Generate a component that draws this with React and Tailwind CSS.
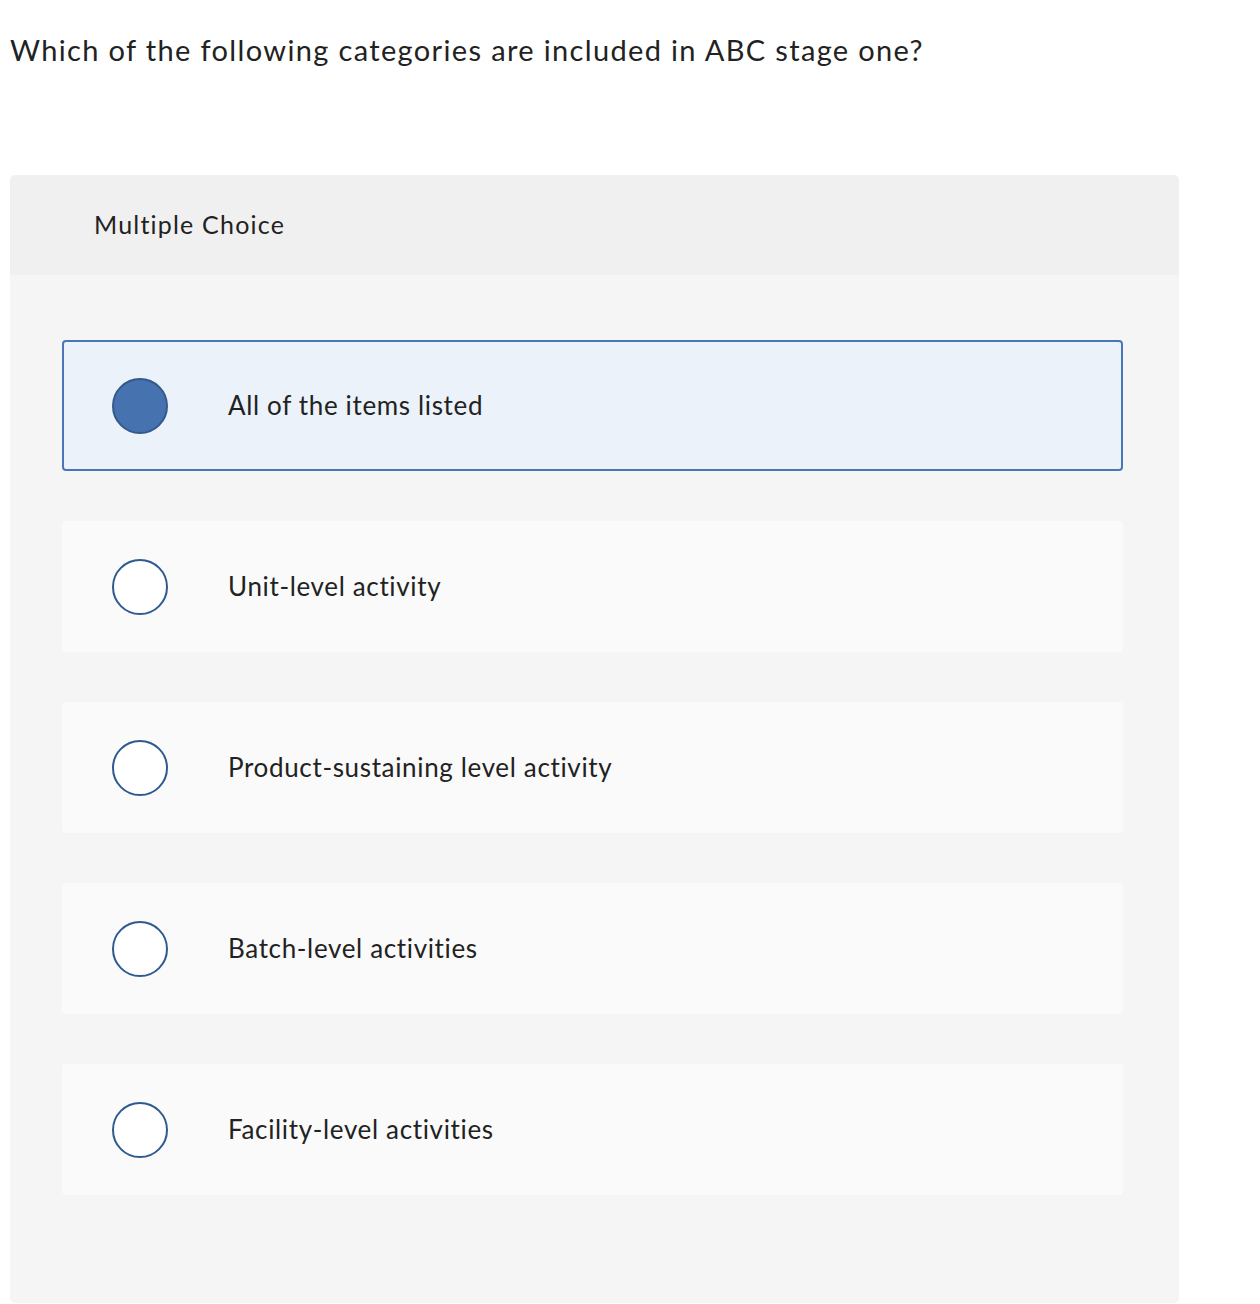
const options = [
  "All of the items listed",
  "Unit-level activity",
  "Product-sustaining level activity",
  "Batch-level activities",
  "Facility-level activities",
];

function Radio({ checked }) {
  return checked ? (
    <span className="w-[56px] h-[56px] rounded-full bg-[#4672b0] border-2 border-[#34598c] shrink-0" />
  ) : (
    <span className="w-[56px] h-[56px] rounded-full bg-white border-2 border-[#2f5a8f] shrink-0" />
  );
}

export default function App() {
  const selected = 0;
  return (
    <div className="bg-white w-[1260px] h-[1304px] text-[#222] font-['Lato','Liberation_Sans',sans-serif]">
      <h1 className="pl-[10px] pt-[30px] text-[29px] leading-[40px] tracking-[1.35px]">
        Which of the following categories are included in ABC stage one?
      </h1>
      <div className="mt-[105px] ml-[10px] w-[1169px] h-[1128px] rounded-[5px] bg-[#f5f5f5] overflow-hidden">
        <div className="h-[100px] bg-[#f0f0f0] pl-[84px] pt-[33px] text-[25px] leading-[32px] tracking-[1.2px]">
          Multiple Choice
        </div>
        <div className="pl-[52px] pr-[56px] pt-[65px] flex flex-col gap-[50px]">
          {options.map((text, i) => (
            <div
              key={i}
              className={
                i === selected
                  ? "h-[131px] rounded-[4px] border-2 border-[#4a76b6] bg-[#ebf2fa] flex items-center pl-[48px]"
                  : "h-[131px] rounded-[4px] bg-[#fafafa] flex items-center pl-[50px]"
              }
            >
              <Radio checked={i === selected} />
              <span className="ml-[60px] text-[26px] tracking-[0.65px]">{text}</span>
            </div>
          ))}
        </div>
      </div>
    </div>
  );
}
